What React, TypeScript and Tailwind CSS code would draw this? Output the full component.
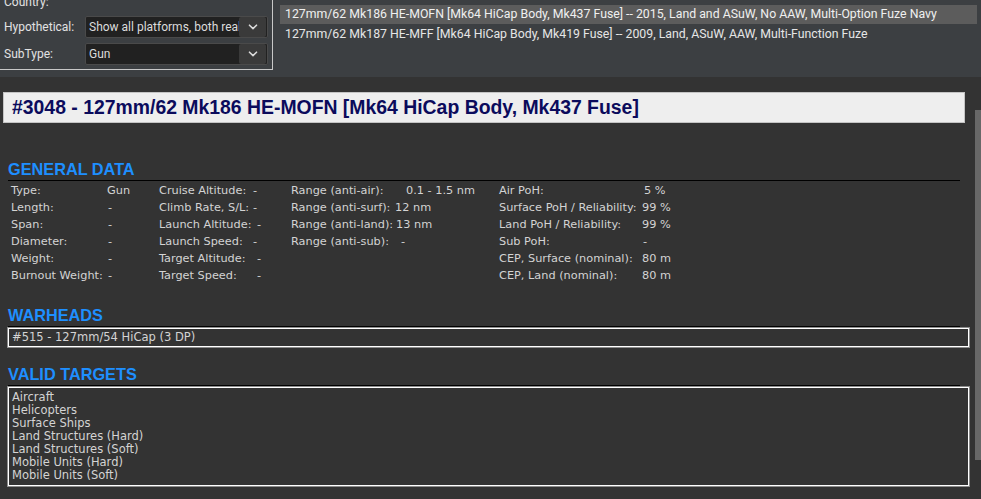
import React from "react";

const Chevron = () => (
  <svg width="10" height="6" viewBox="0 0 10 6" fill="none">
    <path d="M1.5 1.2 L5 4.6 L8.5 1.2" stroke="#d8d8d8" strokeWidth="1.6" strokeLinecap="round" strokeLinejoin="round" />
  </svg>
);

const Combo = ({ text }: { text: string }) => (
  <div className="w-[183px] h-[22px] bg-[#212121] border border-[#4a4a4a] rounded-[2px] flex items-center overflow-hidden">
    <div className="flex-1 pl-[3px] text-[12px] text-[#dcdcdc] whitespace-nowrap overflow-hidden">{text}</div>
    <div className="w-[27px] h-[20px] mr-[1px] bg-[#3a3a3a] rounded-[2px] flex items-center justify-center">
      <Chevron />
    </div>
  </div>
);

const Header = ({ children }: { children: React.ReactNode }) => (
  <div className="w-[952px] border-b border-black text-[16.3px] leading-[19px] font-bold text-[#1e8fff] pb-[1px]" style={{ fontFamily: '"Liberation Sans", Arial, sans-serif' }}>
    {children}
  </div>
);

// [label, value, valueX] for each of 4 columns; columns start at x 11, 159, 291, 499
type Cell = [string, string, number];
const colStart = [11, 159, 291, 499, 760];

const rows: Cell[][] = [
  [["Type:", "Gun", 107], ["Cruise Altitude:", "-", 253], ["Range (anti-air):", "0.1 - 1.5 nm", 406], ["Air PoH:", "5 %", 644]],
  [["Length:", "-", 108], ["Climb Rate, S/L:", "-", 253], ["Range (anti-surf):", "12 nm", 395], ["Surface PoH / Reliability:", "99 %", 642]],
  [["Span:", "-", 108], ["Launch Altitude:", "-", 257], ["Range (anti-land):", "13 nm", 396], ["Land PoH / Reliability:", "99 %", 642]],
  [["Diameter:", "-", 108], ["Launch Speed:", "-", 253], ["Range (anti-sub):", "-", 401], ["Sub PoH:", "-", 643]],
  [["Weight:", "-", 108], ["Target Altitude:", "-", 257], ["", "", 400], ["CEP, Surface (nominal):", "80 m", 642]],
  [["Burnout Weight:", "-", 108], ["Target Speed:", "-", 257], ["", "", 400], ["CEP, Land (nominal):", "80 m", 642]],
];

const targets = [
  "Aircraft",
  "Helicopters",
  "Surface Ships",
  "Land Structures (Hard)",
  "Land Structures (Soft)",
  "Mobile Units (Hard)",
  "Mobile Units (Soft)",
];

export default function App() {
  const ui = { fontFamily: 'Roboto, "Noto Sans", sans-serif' };
  const data = { fontFamily: '"DejaVu Sans", Verdana, sans-serif' };
  return (
    <div className="w-[981px] h-[499px] overflow-hidden bg-[#333333] flex flex-col">
      {/* top area */}
      <div className="h-[77px] bg-[#3c3f42] flex shrink-0" style={ui}>
        <div className="w-[273px] h-[70px] border-r border-b border-[#c8c8c8] overflow-hidden flex flex-col">
          <div className="mt-[-7px] h-[18px] pl-[4px] text-[12px] leading-[18px] text-[#e2e2e2]">Country:</div>
          <div className="mt-[5px] flex items-center">
            <div className="w-[85px] pl-[4px] text-[12px] text-[#e2e2e2]">Hypothetical:</div>
            <Combo text="Show all platforms, both real and hypothetical" />
          </div>
          <div className="mt-[5px] flex items-center">
            <div className="w-[85px] pl-[4px] text-[12px] text-[#e2e2e2]">SubType:</div>
            <Combo text="Gun" />
          </div>
        </div>
        <div className="flex-1 pl-[7px] pr-[4px] overflow-hidden">
          <div className="mt-[-16px] flex flex-col">
            <div className="h-[19px] pl-[5px] text-[12.3px] leading-[19px] text-[#e6e6e6] whitespace-nowrap">
              127mm/62 Mk172 HE-PD [Mk64 HiCap Body, Mk407 Fuse] -- 2005, Land and ASuW, No AAW, Point Detonating Fuze Navy
            </div>
            <div className="h-[19px] mt-[2px] pl-[5px] bg-[#5c5c5c] text-[12.3px] leading-[19px] text-[#f0f0f0] whitespace-nowrap">
              127mm/62 Mk186 HE-MOFN [Mk64 HiCap Body, Mk437 Fuse] -- 2015, Land and ASuW, No AAW, Multi-Option Fuze Navy
            </div>
            <div className="h-[19px] mt-[1px] pl-[5px] text-[12.3px] leading-[19px] text-[#e6e6e6] whitespace-nowrap">
              127mm/62 Mk187 HE-MFF [Mk64 HiCap Body, Mk419 Fuse] -- 2009, Land, ASuW, AAW, Multi-Function Fuze
            </div>
          </div>
        </div>
      </div>

      {/* main */}
      <div className="flex-1 flex min-h-0">
        <div className="flex-1 pl-[3px] pt-[15px]">
          <div className="w-[962px] h-[31px] bg-[#eeeeee] border border-[#c4c4c4] flex items-center pl-[8px]">
            <span className="text-[19.4px] font-bold text-[#0b0b5c]" style={{ fontFamily: '"Liberation Sans", Arial, sans-serif' }}>
              #3048 - 127mm/62 Mk186 HE-MOFN [Mk64 HiCap Body, Mk437 Fuse]
            </span>
          </div>

          <div className="ml-[5px] mt-[37px]">
            <Header>GENERAL DATA</Header>
            <div className="pl-[3px] pt-[2px] text-[11.3px] text-[#d4d4d4]" style={data}>
              {rows.map((r, i) => (
                <div key={i} className="h-[17px] flex items-center whitespace-nowrap">
                  {r.map((c, j) => (
                    <React.Fragment key={j}>
                      <div className="shrink-0 overflow-visible" style={{ width: c[2] - colStart[j] }}>{c[0]}</div>
                      <div className="shrink-0" style={{ width: colStart[j + 1] - c[2] }}>{c[1]}</div>
                    </React.Fragment>
                  ))}
                </div>
              ))}
            </div>
          </div>

          <div className="ml-[5px] mt-[21px]">
            <Header>WARHEADS</Header>
            <div className="mt-[1px] w-[961px] h-[19px] border border-white shadow-[0_0_0_1px_#8c8c8c] flex items-center pl-[3px] text-[11.5px] text-[#d4d4d4]" style={data}>
              #515 - 127mm/54 HiCap (3 DP)
            </div>
          </div>

          <div className="ml-[5px] mt-[18px]">
            <Header>VALID TARGETS</Header>
            <div className="mt-[1px] w-[961px] h-[99px] border border-white shadow-[0_0_0_1px_#8c8c8c] pl-[3px] pt-[3px] text-[11.5px] leading-[13px] text-[#d4d4d4]" style={data}>
              {targets.map((t) => (
                <div key={t}>{t}</div>
              ))}
            </div>
          </div>
        </div>
        <div className="w-[6px] flex flex-col">
          <div className="h-[33px]" />
          <div className="h-[350px] bg-[#686868]" />
        </div>
      </div>
    </div>
  );
}
